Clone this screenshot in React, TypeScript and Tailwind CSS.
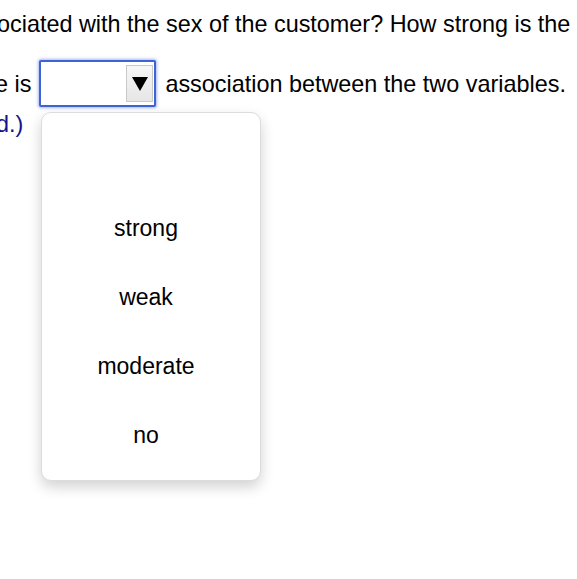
import React from "react";

export default function App() {
  const options = ["", "strong", "weak", "moderate", "no"];
  return (
    <div className="relative w-[577px] h-[579px] overflow-hidden bg-white text-black" style={{ fontFamily: '"Liberation Sans", Arial, sans-serif' }}>
      <div className="pt-[10px] whitespace-nowrap text-[23.4px] leading-[28px]">
        <div className="ml-[-3px]">ociated with the sex of the customer? How strong is the association</div>
      </div>
      <div className="mt-[22px] flex items-center whitespace-nowrap text-[23.4px] leading-[28px]">
        <span className="ml-[-5px]">e is</span>
        <div className="ml-[8px] flex h-[47px] w-[117px] shrink-0 items-center justify-end rounded-[2px] border-2 border-[#3d63d6] bg-white pr-[1px] shadow-[0_0_3px_1px_rgba(61,99,214,0.45)]">
          <div className="flex h-[37px] w-[27px] items-center justify-center border border-[#c9c9c9] bg-gradient-to-b from-[#f7f7f7] to-[#e6e6e6]">
            <svg width="18" height="16" viewBox="0 0 18 16">
              <path d="M1 1 L17 1 L9 15 Z" fill="#000" />
            </svg>
          </div>
        </div>
        <span className="ml-[9px]">association between the two variables.</span>
      </div>
      <div className="mt-[3px] whitespace-nowrap text-[23.4px] leading-[28px] text-[#14148a]">
        <span className="ml-[-4px]">d.)</span>
      </div>
      <div className="absolute left-[41px] top-[112px] w-[220px] rounded-[10px] border border-[#dcdcdc] bg-white pt-[12px] pb-[10px] pr-[10px] shadow-[0_6px_14px_rgba(0,0,0,0.18)]">
        {options.map((o, i) => (
          <div key={i} className="flex h-[69px] items-center justify-center text-[23px]">
            {o}
          </div>
        ))}
      </div>
    </div>
  );
}
